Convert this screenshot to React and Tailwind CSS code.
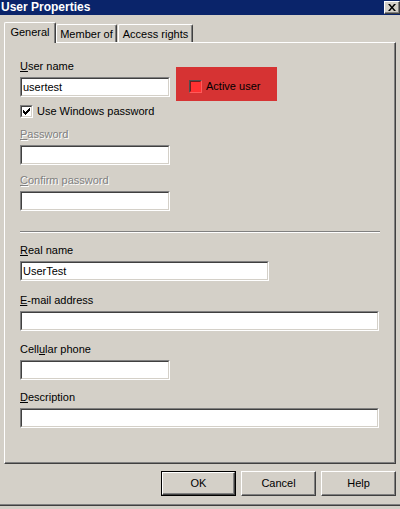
import React from "react";

const FONT = "font-['Liberation_Sans',Arial,sans-serif]";

// Classic 3D sunken edit box
function EditBox({ width, value }) {
  return (
    <div className={`${width} h-[20px] border border-t-[#808080] border-l-[#808080] border-b-white border-r-white`}>
      <div className="h-full border border-t-[#404040] border-l-[#404040] border-b-[#d4d0c8] border-r-[#d4d0c8] bg-white pl-[1px] flex items-center text-[11px] leading-[13px] text-black">
        {value}
      </div>
    </div>
  );
}

function Label({ children, disabled, className = "" }) {
  return (
    <div
      className={`h-[13px] text-[11px] leading-[13px] ${
        disabled ? "text-[#808080] [text-shadow:1px_1px_0_#ffffff]" : "text-black"
      } ${className}`}
    >
      {children}
    </div>
  );
}

function Accel({ children }) {
  return <span className="underline underline-offset-[1px]">{children}</span>;
}

function CheckBox({ checked, red }) {
  return (
    <div
      className={`w-[13px] h-[13px] shrink-0 border ${
        red
          ? "border-t-[#505050] border-l-[#505050] border-b-[#ff5a5a] border-r-[#ff5a5a]"
          : "border-t-[#808080] border-l-[#808080] border-b-white border-r-white"
      }`}
    >
      <div
        className={`w-full h-full border flex items-center justify-center ${
          red
            ? "border-t-[#6a2020] border-l-[#6a2020] border-b-[#ff3030] border-r-[#ff3030] bg-[#ff3232]"
            : "border-t-[#404040] border-l-[#404040] border-b-[#d4d0c8] border-r-[#d4d0c8] bg-white"
        }`}
      >
        {checked && (
          <svg width="7" height="7" viewBox="0 0 7 7">
            <path d="M0 2h1v1h1v1h1V3h1V2h1V1h1V0h1v3H6v1H5v1H4v1H3v1H2V6H1V5H0z" fill="#000" />
          </svg>
        )}
      </div>
    </div>
  );
}

function Button({ label, isDefault }) {
  const face = (
    <div className="w-full h-full border border-t-white border-l-white border-r-[#404040] border-b-[#404040] shadow-[inset_-1px_-1px_0_#808080] bg-[#d4d0c8] flex items-center justify-center text-[11px] text-black">
      {label}
    </div>
  );
  return (
    <div className={`w-[75px] h-[25px] ${isDefault ? "border border-black" : ""}`}>{face}</div>
  );
}

function Tab({ label, selected, width }) {
  return (
    <div
      className={`${width} ${
        selected ? "h-[21px] mb-[-1px] relative z-10" : "h-[18px]"
      } bg-[#d4d0c8] border-t border-l border-t-white border-l-white border-r border-r-[#404040] shadow-[inset_-1px_0_0_#808080] rounded-t-[2px] flex items-center justify-center text-[11px] text-black ${
        selected ? "pb-[2px]" : "pt-[1px]"
      }`}
    >
      {label}
    </div>
  );
}

export default function App() {
  return (
    <div className={`w-[400px] h-[509px] bg-[#d4d0c8] flex flex-col overflow-hidden ${FONT}`}>
      {/* title bar */}
      <div className="h-[15px] bg-[#0a246a] flex items-start justify-between">
        <div className="pl-[1px] text-[12px] leading-[15px] font-bold text-white">User Properties</div>
        <div className="mt-[1px] w-[16px] h-[13px] border border-t-white border-l-white border-r-[#404040] border-b-[#404040] shadow-[inset_-1px_-1px_0_#808080] bg-[#d4d0c8] flex items-center justify-center">
          <svg width="8" height="7" viewBox="0 0 8 7">
            <path d="M0 0h2l2 2.4L6 0h2L5 3.5 8 7H6L4 4.6 2 7H0l3-3.5z" fill="#000" />
          </svg>
        </div>
      </div>

      {/* tabs */}
      <div className="h-[27px] flex items-end pl-[4px]">
        <Tab label="General" selected width="w-[52px]" />
        <Tab label="Member of" width="w-[61px]" />
        <div className="w-[1px]" />
        <Tab label="Access rights" width="w-[75px]" />
      </div>

      {/* tab page */}
      <div className="mx-[4px] h-[422px] border border-t-white border-l-white border-r-[#404040] border-b-[#404040] shadow-[inset_-1px_-1px_0_#808080] pl-[15px] pt-[17px]">
        <div className="flex items-start gap-[6px]">
          <div>
            <Label>
              <Accel>U</Accel>ser name
            </Label>
            <div className="mt-[4px]">
              <EditBox width="w-[150px]" value="usertest" />
            </div>
          </div>
          {/* highlighted status box hangs a few px below the edit box row */}
          <div className="mt-[7px] mb-[-4px] w-[101px] h-[34px] bg-[#d63333] flex items-start gap-[4px] pl-[13px] pt-[13px]">
            <CheckBox red />
            <span className="text-[11px] leading-[13px] text-black">Active user</span>
          </div>
        </div>

        <div className="mt-[8px] flex items-center gap-[4px]">
          <CheckBox checked />
          <span className="text-[11px] leading-[13px] text-black">Use Windows password</span>
        </div>

        <Label disabled className="mt-[10px]">
          <Accel>P</Accel>assword
        </Label>
        <div className="mt-[4px]">
          <EditBox width="w-[150px]" />
        </div>

        <Label disabled className="mt-[9px]">
          <Accel>C</Accel>onfirm password
        </Label>
        <div className="mt-[4px]">
          <EditBox width="w-[150px]" />
        </div>

        <div className="mt-[20px] w-[360px] h-[2px] border-t border-t-[#808080] border-b border-b-white" />

        <Label className="mt-[11px]">
          <Accel>R</Accel>eal name
        </Label>
        <div className="mt-[4px]">
          <EditBox width="w-[249px]" value="UserTest" />
        </div>

        <Label className="mt-[13px]">
          <Accel>E</Accel>-mail address
        </Label>
        <div className="mt-[4px]">
          <EditBox width="w-[359px]" />
        </div>

        <Label className="mt-[12px]">
          Cell<Accel>u</Accel>lar phone
        </Label>
        <div className="mt-[4px]">
          <EditBox width="w-[150px]" />
        </div>

        <Label className="mt-[11px]">
          <Accel>D</Accel>escription
        </Label>
        <div className="mt-[4px]">
          <EditBox width="w-[359px]" />
        </div>
      </div>

      {/* dialog buttons */}
      <div className="mt-[7px] flex justify-end gap-[5px] pr-[4px]">
        <Button label="OK" isDefault />
        <Button label="Cancel" />
        <Button label="Help" />
      </div>

      <div className="mt-[8px] h-[2px] border-t border-t-[#808080] border-b border-b-[#404040]" />
    </div>
  );
}
